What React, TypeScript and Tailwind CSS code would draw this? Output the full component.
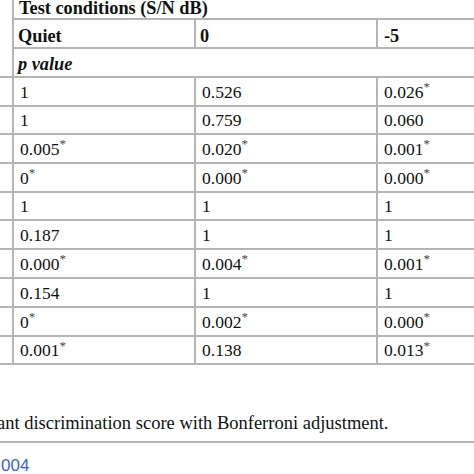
import React from "react";

type Cell = { v: string; s?: boolean };
const rows: { h: string; c: Cell[] }[] = [
  { h: "h-[29px]", c: [{ v: "1" }, { v: "0.526" }, { v: "0.026", s: true }] },
  { h: "h-[28px]", c: [{ v: "1" }, { v: "0.759" }, { v: "0.060" }] },
  { h: "h-[29px]", c: [{ v: "0.005", s: true }, { v: "0.020", s: true }, { v: "0.001", s: true }] },
  { h: "h-[29px]", c: [{ v: "0", s: true }, { v: "0.000", s: true }, { v: "0.000", s: true }] },
  { h: "h-[28px]", c: [{ v: "1" }, { v: "1" }, { v: "1" }] },
  { h: "h-[29px]", c: [{ v: "0.187" }, { v: "1" }, { v: "1" }] },
  { h: "h-[29px]", c: [{ v: "0.000", s: true }, { v: "0.004", s: true }, { v: "0.001", s: true }] },
  { h: "h-[29px]", c: [{ v: "0.154" }, { v: "1" }, { v: "1" }] },
  { h: "h-[29px]", c: [{ v: "0", s: true }, { v: "0.002", s: true }, { v: "0.000", s: true }] },
  { h: "h-[28px]", c: [{ v: "0.001", s: true }, { v: "0.138" }, { v: "0.013", s: true }] },
];

function Val({ c }: { c: Cell }) {
  return (
    <span>
      {c.v}
      {c.s && <sup className="text-[13px] text-[#444]">*</sup>}
    </span>
  );
}

export default function App() {
  const line = "border-[#b4b4b4]";
  return (
    <div className="w-[474px] h-[474px] overflow-hidden bg-white text-[#111] font-['Liberation_Serif',serif]">
      <div className="mt-[-9px] flex flex-col">
        {/* Row 0 */}
        <div className="flex h-[29px]">
          <div className={`w-[14px] border-r-2 ${line}`} />
          <div className={`flex-1 border-b-2 ${line} flex items-center pt-[8px] pl-[5px] font-bold text-[18.3px] leading-[19px]`}>
            Test conditions (S/N dB)
          </div>
        </div>
        {/* Row 1 */}
        <div className="flex h-[29px]">
          <div className={`w-[14px] border-r-2 ${line}`} />
          <div className={`w-[182px] border-r-2 border-b-2 ${line} flex items-center pt-[5px] pl-[4px] font-bold text-[18.3px] leading-[19px]`}>
            Quiet
          </div>
          <div className={`w-[182px] border-r-2 border-b-2 ${line} flex items-center pt-[5px] pl-[4px] font-bold text-[18.3px] leading-[19px]`}>
            0
          </div>
          <div className={`flex-1 border-b-2 ${line} flex items-center pt-[5px] pl-[6px] font-bold text-[18.3px] leading-[19px]`}>
            -5
          </div>
        </div>
        {/* Row 2 */}
        <div className="flex h-[29px]">
          <div className={`w-[14px] border-r-2 border-b-2 ${line}`} />
          <div className={`flex-1 border-b-2 ${line} flex items-center pt-[4px] pl-[4px] font-bold italic text-[18.3px] leading-[19px]`}>
            p value
          </div>
        </div>
        {rows.map((r, i) => (
          <div key={i} className={`flex ${r.h}`}>
            <div className={`w-[14px] border-r-2 border-b-2 ${line}`} />
            <div className={`w-[182px] border-r-2 border-b-2 ${line} flex items-center pl-[6px] text-[17.5px] leading-[18px]`}>
              <Val c={r.c[0]} />
            </div>
            <div className={`w-[182px] border-r-2 border-b-2 ${line} flex items-center pl-[6px] text-[17.5px] leading-[18px]`}>
              <Val c={r.c[1]} />
            </div>
            <div className={`flex-1 border-b-2 ${line} flex items-center pl-[6px] text-[17.5px] leading-[18px]`}>
              <Val c={r.c[2]} />
            </div>
          </div>
        ))}
        {/* Footnote */}
        <div className={`h-[78px] border-b-2 ${line} flex items-end pb-[9px] text-[18.5px] leading-[18px] whitespace-nowrap`}>
          <span className="ml-[-3px]">ant discrimination score with Bonferroni adjustment.</span>
        </div>
        <div className="mt-[14px] pl-[1px] text-[17px] leading-[17px] text-[#3e62c6] font-['Liberation_Sans',sans-serif]">
          004
        </div>
      </div>
    </div>
  );
}
